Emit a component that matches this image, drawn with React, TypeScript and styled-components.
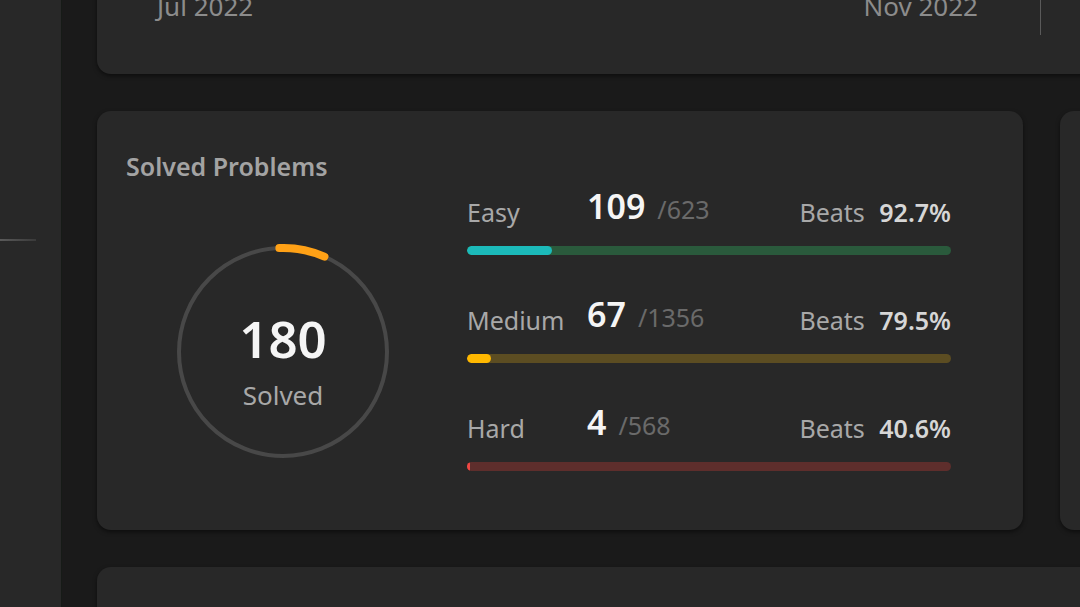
import styled, { createGlobalStyle } from 'styled-components';

const GlobalStyle = createGlobalStyle`
  html, body {
    margin: 0;
    padding: 0;
    background: #1a1a1a;
    font-family: "Noto Sans", "Open Sans", sans-serif;
  }
`;

type Level = {
  name: string;
  solved: number;
  total: number;
  beats: string;
  fill: string;
  track: string;
};

const levels: Level[] = [
  { name: 'Easy', solved: 109, total: 623, beats: '92.7%', fill: '#1cbaba', track: '#2a5a3c' },
  { name: 'Medium', solved: 67, total: 1356, beats: '79.5%', fill: '#ffb800', track: '#5c4d22' },
  { name: 'Hard', solved: 4, total: 568, beats: '40.6%', fill: '#ef4743', track: '#5e2e2c' },
];

function SolvedRing({ solved, total }: { solved: number; total: number }) {
  const r = 104;
  const c = 2 * Math.PI * r;
  const part = (solved / total) * c;
  return (
    <Ring>
      <svg width="216" height="216" viewBox="0 0 216 216">
        <circle cx="108" cy="108" r={r} fill="none" stroke="#484848" strokeWidth="4" />
        <circle
          cx="108"
          cy="108"
          r={r}
          fill="none"
          stroke="#ffa116"
          strokeWidth="8"
          strokeLinecap="round"
          strokeDasharray={`${part} ${c}`}
          transform="rotate(-92 108 108)"
        />
      </svg>
      <RingText>
        <Big>{solved}</Big>
        <Small>Solved</Small>
      </RingText>
    </Ring>
  );
}

function LevelRow({ level }: { level: Level }) {
  const pct = Math.max((level.solved / level.total) * 100, 0.6);
  return (
    <Row>
      <RowHead>
        <Label>{level.name}</Label>
        <Count>
          {level.solved}
          <Total>/{level.total}</Total>
        </Count>
        <Beats>
          Beats <strong>{level.beats}</strong>
        </Beats>
      </RowHead>
      <Track $color={level.track}>
        <Fill $color={level.fill} style={{ width: `${pct}%` }} />
      </Track>
    </Row>
  );
}

export default function App() {
  const totalAll = levels.reduce((s, l) => s + l.total, 0);
  const solvedAll = levels.reduce((s, l) => s + l.solved, 0);
  return (
    <>
      <GlobalStyle />
      <Page>
        <Sidebar>
          <Divider />
        </Sidebar>
        <Main>
          <ChartCard>
            <Axis>
              <span>Jul 2022</span>
              <span>Nov 2022</span>
            </Axis>
            <AxisLine />
          </ChartCard>
          <CardRow>
            <StatsCard>
              <LeftCol>
                <Title>Solved Problems</Title>
                <SolvedRing solved={solvedAll} total={totalAll} />
              </LeftCol>
              <RightCol>
                {levels.map((l) => (
                  <LevelRow key={l.name} level={l} />
                ))}
              </RightCol>
            </StatsCard>
            <SideCard />
          </CardRow>
          <BottomCard />
        </Main>
      </Page>
    </>
  );
}

const Page = styled.div`
  display: flex;
  width: 1080px;
  height: 607px;
  overflow: hidden;
  background: #1a1a1a;
`;

const Sidebar = styled.aside`
  width: 62px;
  flex-shrink: 0;
  background: #282828;
  padding-top: 239px;
  box-sizing: border-box;
  border-right: 1px solid #161b17;
`;

const Divider = styled.div`
  width: 36px;
  height: 2px;
  background: linear-gradient(90deg, #5a5a5a, #3a3a3a);
`;

const Main = styled.main`
  flex: 1;
  min-width: 0;
  padding-left: 35px;
  display: flex;
  flex-direction: column;
  gap: 37px;
`;

const Card = styled.section`
  background: #282828;
  border-radius: 14px;
  box-shadow: 0 2px 4px rgba(0, 0, 0, 0.5);
  box-sizing: border-box;
  flex-shrink: 0;
`;

const ChartCard = styled(Card)`
  width: 1100px;
  height: 200px;
  margin-top: -126px;
  position: relative;
  display: flex;
  align-items: flex-end;
`;

const Axis = styled.div`
  width: 821px;
  padding: 0 0 50px 60px;
  display: flex;
  justify-content: space-between;
  color: #8c8c8c;
  font-size: 26px;
  line-height: 36px;
  box-sizing: content-box;
`;

const AxisLine = styled.div`
  position: absolute;
  left: 943px;
  top: 0;
  width: 1px;
  height: 161px;
  background: #5a5a5a;
`;

const CardRow = styled.div`
  display: flex;
  gap: 37px;
`;

const StatsCard = styled(Card)`
  width: 926px;
  height: 419px;
  padding: 40px 0 0 29px;
  display: flex;
  gap: 27px;
`;

const SideCard = styled(Card)`
  width: 300px;
  height: 419px;
`;

const BottomCard = styled(Card)`
  width: 1100px;
  height: 200px;
`;

const LeftCol = styled.div`
  width: 314px;
  display: flex;
  flex-direction: column;
`;

const Title = styled.h2`
  margin: 0;
  font-size: 25px;
  line-height: 30px;
  font-weight: 600;
  color: #a3a3a3;
`;

const Ring = styled.div`
  position: relative;
  width: 216px;
  height: 216px;
  margin: 63px auto 0;
`;

const RingText = styled.div`
  position: absolute;
  inset: 0;
  display: flex;
  flex-direction: column;
  align-items: center;
  padding-top: 64px;
  box-sizing: border-box;
`;

const Big = styled.div`
  font-size: 51px;
  line-height: 60px;
  font-weight: 600;
  color: #f5f5f5;
`;

const Small = styled.div`
  font-size: 26px;
  line-height: 30px;
  margin-top: 12px;
  color: #a8a8a8;
`;

const RightCol = styled.div`
  width: 484px;
  padding-top: 45px;
  display: flex;
  flex-direction: column;
  gap: 49px;
`;

const Row = styled.div`
  display: flex;
  flex-direction: column;
  gap: 18px;
`;

const RowHead = styled.div`
  display: flex;
  align-items: center;
  height: 32px;
`;

const Label = styled.span`
  width: 120px;
  font-size: 25px;
  line-height: 32px;
  color: #a8a8a8;
`;

const Count = styled.span`
  font-size: 34px;
  font-weight: 600;
  color: #f5f5f5;
  line-height: 32px;
  margin-bottom: 9px;
`;

const Total = styled.span`
  margin-left: 12px;
  font-size: 25px;
  font-weight: 400;
  color: #6a6a6a;
`;

const Beats = styled.span`
  margin-left: auto;
  font-size: 25px;
  line-height: 32px;
  color: #a8a8a8;

  strong {
    margin-left: 8px;
    font-weight: 600;
    color: #d6d6d6;
  }
`;

const Track = styled.div<{ $color: string }>`
  height: 9px;
  border-radius: 5px;
  background: ${(p) => p.$color};
  overflow: hidden;
`;

const Fill = styled.div<{ $color: string }>`
  height: 100%;
  border-radius: 5px;
  background: ${(p) => p.$color};
`;
